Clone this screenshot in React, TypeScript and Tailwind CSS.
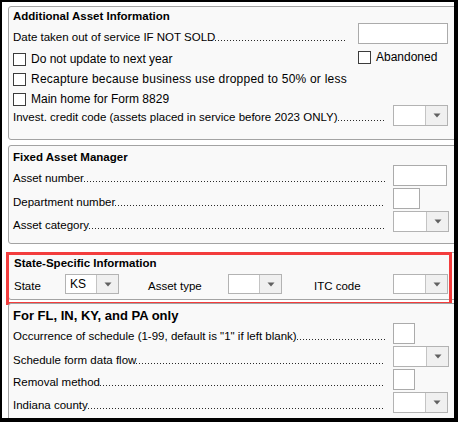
import React from "react";

function Label({ text, className = "" }: { text: string; className?: string }) {
  return (
    <div className={"flex h-[14px] text-[11.5px] leading-[14px] text-black " + className}>
      <span className="shrink-0 whitespace-nowrap">{text}</span>
      <div className="mb-[3px] h-[1px] flex-1 self-end bg-[linear-gradient(to_right,#2a2a2a_1px,transparent_1px)] bg-[length:3px_1px] bg-repeat-x" />
    </div>
  );
}

function Input({ className = "" }: { className?: string }) {
  return <div className={"shrink-0 border border-[#ababab] bg-white " + className} />;
}

function Caret() {
  return (
    <svg width="8" height="5" viewBox="0 0 8 5">
      <path d="M0.5 0.5 L7.5 0.5 L4 4.5 Z" fill="#606060" />
    </svg>
  );
}

function Dropdown({ className = "", value = "" }: { className?: string; value?: string }) {
  return (
    <div className={"flex shrink-0 border border-[#b3b3b3] bg-white " + className}>
      <div className="flex flex-1 items-center pl-[4px] text-[12px] leading-[14px] text-black">{value}</div>
      <div className="flex w-[22px] items-center justify-center border-l border-[#c4c4c4] bg-[#f0f0f0]">
        <Caret />
      </div>
    </div>
  );
}

function Check({ label, className = "" }: { label: string; className?: string }) {
  return (
    <div className={"flex items-center " + className}>
      <div className="h-[13px] w-[13px] shrink-0 border border-[#3c3c3c] bg-white" />
      <span className="ml-[5px] whitespace-nowrap text-[12px] leading-[14px] text-black">{label}</span>
    </div>
  );
}

const sectionCls =
  "relative w-[460px] shrink-0 rounded-[3px] border border-[#a3a3a3] bg-[#f9f9f9] pl-[4px]";

export default function App() {
  return (
    <div
      className="h-[422px] w-[458px] bg-black pb-[4px] pl-[2px] pr-[4px] pt-[2px]"
      style={{ fontFamily: '"Liberation Sans", Arial, sans-serif' }}
    >
      <div className="flex h-full w-full flex-col overflow-hidden bg-white pl-[6px] pt-[4px]">
        {/* Section 1 */}
        <div className={sectionCls + " h-[134px]"}>
          <div className="h-[16px] pt-[2px] text-[11.5px] font-bold leading-[14px] text-black">
            Additional Asset Information
          </div>
          <div className="flex h-[21px] items-end">
            <Label text="Date taken out of service IF NOT SOLD" className="w-[334px]" />
            <Input className="ml-[11px] h-[21px] w-[90px] self-start" />
          </div>
          <div className="mt-[5px] flex h-[20px] items-center">
            <Check label="Do not update to next year" className="w-[345px]" />
            <Check label="Abandoned" className="relative -top-[2px]" />
          </div>
          <div className="flex h-[20px] items-center">
            <div className="flex items-center">
              <div className="h-[13px] w-[13px] shrink-0 border border-[#3c3c3c] bg-white" />
              <span className="ml-[5px] whitespace-nowrap text-[12px] leading-[14px] tracking-[0.22px] text-black">
                Recapture because business use dropped to 50% or less
              </span>
            </div>
          </div>
          <div className="flex h-[20px] items-center">
            <Check label="Main home for Form 8829" />
          </div>
          <div className="-mt-[4px] flex h-[21px]">
            <Label
              text="Invest. credit code (assets placed in service before 2023 ONLY)"
              className="mb-[2px] w-[372px] self-end"
            />
            <Dropdown className="ml-[8px] h-[21px] w-[55px]" />
          </div>
        </div>

        {/* Section 2 */}
        <div className={sectionCls + " mt-[5px] h-[99px]"}>
          <div className="h-[18px] pt-[4px] text-[11.5px] font-bold leading-[14px] text-black">
            Fixed Asset Manager
          </div>
          <div className="mt-[1px] flex h-[21px] items-end">
            <Label text="Asset number" className="mb-[1px] w-[372px]" />
            <Input className="ml-[8px] h-[21px] w-[54px] self-start" />
          </div>
          <div className="mt-[2px] flex h-[21px] items-end">
            <Label text="Department number" className="w-[372px]" />
            <Input className="ml-[8px] h-[21px] w-[27px] self-start" />
          </div>
          <div className="mt-[2px] flex h-[21px] items-end">
            <Label text="Asset category" className="w-[372px]" />
            <Dropdown className="ml-[8px] h-[21px] w-[56px] self-start" />
          </div>
        </div>

        {/* Section 3 */}
        <div className={sectionCls + " mt-[8px] h-[48px] pl-[5px]"}>
          <div className="h-[17px] pt-[3px] text-[11.5px] font-bold leading-[14px] text-black">
            State-Specific Information
          </div>
          <div className="mt-[4px] flex h-[20px] items-end">
            <div className="mb-[1px] w-[51px] whitespace-nowrap text-[11.5px] leading-[14px] text-black">State</div>
            <Dropdown className="h-[20px] w-[54px] self-start" value="KS" />
            <div className="mb-[1px] ml-[29px] w-[80px] whitespace-nowrap text-[11.5px] leading-[14px] text-black">
              Asset type
            </div>
            <Dropdown className="h-[20px] w-[54px] self-start" />
            <div className="mb-[1px] ml-[32px] w-[79px] whitespace-nowrap text-[11.5px] leading-[14px] text-black">
              ITC code
            </div>
            <Dropdown className="h-[20px] w-[55px] self-start" />
          </div>
          <div className="pointer-events-none absolute -left-[3px] -top-[1px] h-[53px] w-[446px] border-[3px] border-[#f33d3d]" />
        </div>

        {/* Section 4 */}
        <div className={sectionCls + " mt-[3px] h-[130px]"}>
          <div className="h-[20px] pt-[4px] text-[13px] font-bold leading-[16px] text-black">
            For FL, IN, KY, and PA only
          </div>
          <div className="-mt-[1px] flex h-[21px] items-end">
            <Label text={'Occurrence of schedule (1-99, default is "1" if left blank)'} className="mb-[1px] w-[372px]" />
            <Input className="ml-[8px] h-[21px] w-[22px] self-start" />
          </div>
          <div className="mt-[2px] flex h-[21px] items-end">
            <Label text="Schedule form data flow" className="w-[372px]" />
            <Dropdown className="ml-[8px] h-[21px] w-[56px] self-start" />
          </div>
          <div className="mt-[2px] flex h-[21px] items-end">
            <Label text="Removal method" className="mb-[1px] w-[372px]" />
            <Input className="ml-[8px] h-[21px] w-[22px] self-start" />
          </div>
          <div className="mt-[2px] flex h-[21px] items-end">
            <Label text="Indiana county" className="mb-[1px] w-[372px]" />
            <Dropdown className="ml-[8px] h-[21px] w-[55px] self-start" />
          </div>
        </div>
      </div>
    </div>
  );
}
